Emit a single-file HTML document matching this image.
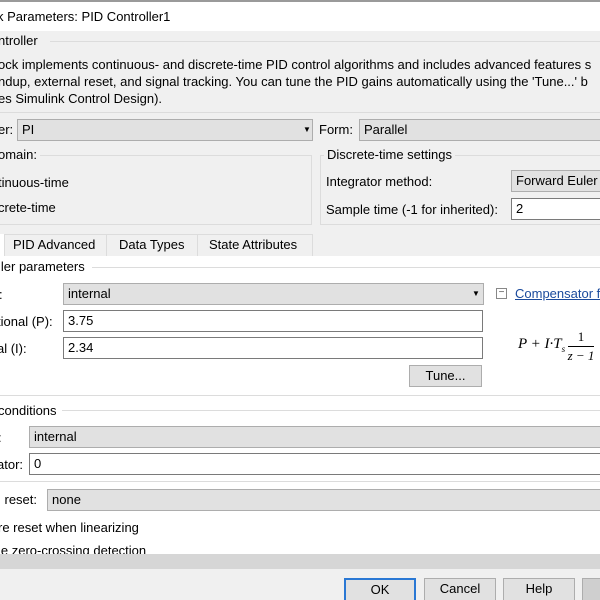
<!DOCTYPE html>
<html><head><meta charset="utf-8"><style>
*{margin:0;padding:0;box-sizing:border-box}
html,body{width:600px;height:600px;overflow:hidden}
body{background:#f0f0f0;font-family:"Liberation Sans",sans-serif;font-size:13px;color:#000;position:relative}
#r{position:absolute;left:0;top:0;width:600px;height:600px;overflow:hidden}
div,span{position:absolute;white-space:nowrap}
.t{line-height:16px}
.box{border:1px solid #adadad;background:#e1e1e1;padding-left:4px;line-height:19px;overflow:hidden}
.w{background:#fff;border-color:#7a7a7a}
.line{height:1px;background:#dcdcdc}
.arr{font-size:8px;line-height:19px}
.btn{border:1px solid #adadad;background:#e1e1e1;text-align:center;line-height:20px}
</style></head><body><div id="r">
<div style="left:0;top:0;width:600px;height:31px;background:#fff;border-top:2px solid #9a9a9a"></div>
<div class="t" style="left:-3px;top:9px">k Parameters: PID Controller1</div>
<div class="t" style="left:-2px;top:33px">ntroller</div>
<div class="line" style="left:50px;top:41px;width:550px"></div>
<div style="left:0;top:57px;width:600px;height:52px;overflow:hidden">
<div class="t" style="left:-2px;top:0">ock implements continuous- and discrete-time PID control algorithms and includes advanced features s</div>
<div class="t" style="left:-2px;top:17px">ndup, external reset, and signal tracking. You can tune the PID gains automatically using the 'Tune...' b</div>
<div class="t" style="left:-2px;top:34px">es Simulink Control Design).</div></div>
<div class="line" style="left:0;top:112px;width:600px"></div>
<div class="t" style="left:-2px;top:122px">er:</div>
<div class="box" style="left:17px;top:119px;width:296px;height:22px">PI</div>
<div class="arr" style="left:303px;top:120px">▼</div>
<div class="t" style="left:319px;top:122px">Form:</div>
<div class="box" style="left:359px;top:119px;width:241px;height:22px;border-right:none">Parallel</div>
<div style="left:-2px;top:155px;width:314px;height:70px;border:1px solid #dcdcdc"></div>
<div class="t" style="left:-2px;top:147px;background:#f0f0f0;padding-right:3px">omain:</div>
<div class="t" style="left:-2px;top:175px">tinuous-time</div>
<div class="t" style="left:-2px;top:200px">crete-time</div>
<div style="left:320px;top:155px;width:280px;height:70px;border:1px solid #dcdcdc;border-right:none"></div>
<div class="t" style="left:324px;top:147px;background:#f0f0f0;padding:0 3px">Discrete-time settings</div>
<div class="t" style="left:326px;top:174px">Integrator method:</div>
<div class="box" style="left:511px;top:170px;width:89px;height:22px;border-right:none">Forward Euler</div>
<div class="t" style="left:326px;top:202px">Sample time (-1 for inherited):</div>
<div class="box w" style="left:511px;top:198px;width:89px;height:22px;border-right:none">2</div>
<div style="left:0;top:234px;width:4px;height:23px;background:#fff"></div>
<div style="left:4px;top:234px;width:309px;height:22px;border:1px solid #dcdcdc;border-bottom:none"></div>
<div style="left:106px;top:234px;width:1px;height:22px;background:#dcdcdc"></div>
<div style="left:197px;top:234px;width:1px;height:22px;background:#dcdcdc"></div>
<div class="t" style="left:13px;top:237px">PID Advanced</div>
<div class="t" style="left:119px;top:237px">Data Types</div>
<div class="t" style="left:209px;top:237px">State Attributes</div>
<div style="left:0;top:256px;width:600px;height:298px;background:#fff"></div>
<div class="t" style="left:-2px;top:259px">ller parameters</div>
<div class="line" style="left:92px;top:267px;width:508px"></div>
<div class="t" style="left:-1px;top:287px">:</div>
<div class="box" style="left:63px;top:283px;width:421px;height:22px">internal</div>
<div class="arr" style="left:472px;top:284px">▼</div>
<div style="left:496px;top:288px;width:11px;height:11px;border:1px solid #888;font-size:10px;line-height:8px;text-align:center;color:#555">−</div>
<div style="left:515px;top:286px;width:85px;height:18px;overflow:hidden"><div class="t" style="left:0;top:0;color:#1a4a9c;text-decoration:underline">Compensator formula</div></div>
<div class="t" style="left:-3px;top:314px">tional (P):</div>
<div class="box w" style="left:63px;top:310px;width:420px;height:22px">3.75</div>
<div class="t" style="left:-3px;top:341px">al (I):</div>
<div class="box w" style="left:63px;top:337px;width:420px;height:22px">2.34</div>
<div style="left:518px;top:336px;font-family:'Liberation Serif',serif;font-style:italic;font-size:15px">P + I·T<sub style="font-size:9px">s</sub></div>
<div style="left:568px;top:330px;width:26px;text-align:center;font-family:'Liberation Serif',serif;font-size:13px;line-height:14px">1</div>
<div style="left:568px;top:346px;width:26px;height:1px;background:#000"></div>
<div style="left:567px;top:349px;width:28px;text-align:center;font-family:'Liberation Serif',serif;font-style:italic;font-size:13px;line-height:14px">z − 1</div>
<div class="btn" style="left:409px;top:365px;width:73px;height:22px">Tune...</div>
<div class="line" style="left:0;top:395px;width:600px"></div>
<div class="t" style="left:-2px;top:403px">conditions</div>
<div class="line" style="left:62px;top:410px;width:538px"></div>
<div class="t" style="left:-2px;top:430px">:</div>
<div class="box" style="left:29px;top:426px;width:571px;height:22px;border-right:none">internal</div>
<div class="t" style="left:-3px;top:457px">ator:</div>
<div class="box w" style="left:29px;top:453px;width:571px;height:22px;border-right:none">0</div>
<div class="line" style="left:0;top:481px;width:600px"></div>
<div class="t" style="left:-2px;top:492px">l reset:</div>
<div class="box" style="left:47px;top:489px;width:553px;height:22px;border-right:none">none</div>
<div class="t" style="left:-2px;top:520px">re reset when linearizing</div>
<div style="left:0;top:540px;width:600px;height:14px;overflow:hidden"><div class="t" style="left:-2px;top:3px">le zero-crossing detection</div></div>
<div style="left:0;top:554px;width:600px;height:15px;background:#d6d6d6"></div>
<div class="btn" style="left:344px;top:578px;width:72px;height:22px;border:2px solid #2a78d4;border-bottom:none">OK</div>
<div class="btn" style="left:424px;top:578px;width:72px;height:22px;border-bottom:none">Cancel</div>
<div class="btn" style="left:503px;top:578px;width:72px;height:22px;border-bottom:none">Help</div>
<div class="btn" style="left:582px;top:578px;width:18px;height:22px;background:#cfcfcf;border-right:none;border-bottom:none"></div>
</div></body></html>
